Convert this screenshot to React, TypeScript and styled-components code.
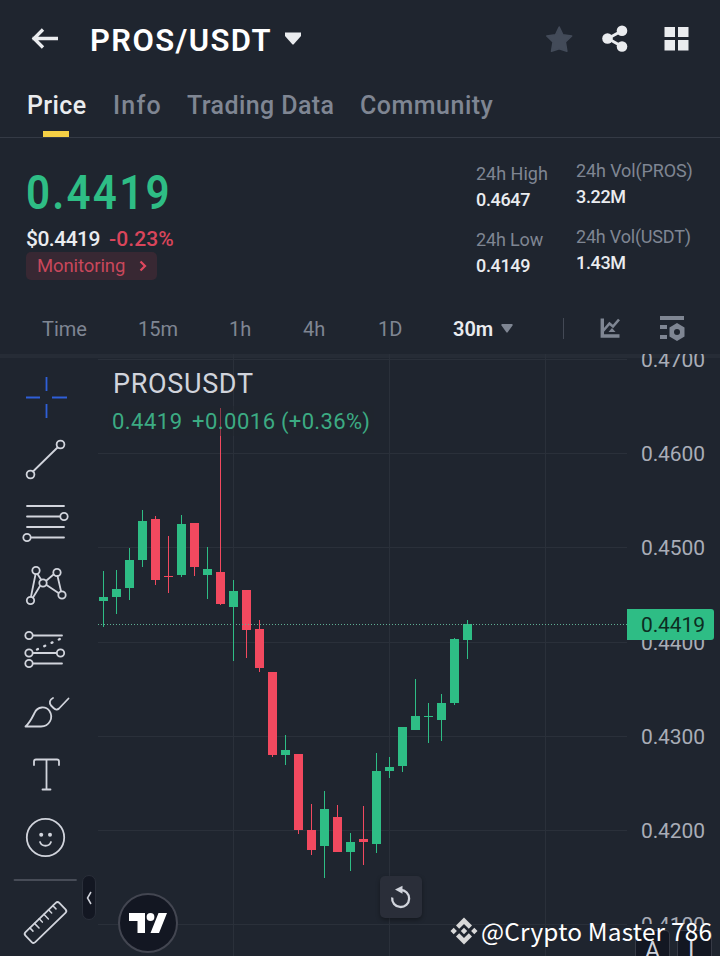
import React from "react";
import styled, { createGlobalStyle } from "styled-components";

const BG = "#1f252f";
const GREEN = "#2ebd85";
const RED = "#f2495f";
const MUTED = "#7f8693";
const BRIGHT = "#eaecef";
const ICON = "#d1d4dc";

const GlobalStyle = createGlobalStyle`
  * { box-sizing: border-box; }
  body { margin: 0; background: ${BG}; overflow: hidden; }
`;

const Screen = styled.div`
  width: 720px;
  height: 956px;
  display: flex;
  flex-direction: column;
  background: ${BG};
  color: ${BRIGHT};
  font-family: Roboto, "Liberation Sans", sans-serif;
  overflow: hidden;
`;

const Header = styled.header`
  height: 78px;
  flex: none;
  display: flex;
  align-items: center;
  padding: 0 28px 0 30px;
`;

const Title = styled.h1`
  margin: 3px 13px 0 32px;
  width: 181px;
  font-size: 31px;
  font-weight: 600;
  line-height: 36px;
  letter-spacing: 1.4px;
  color: #fff;
  white-space: nowrap;
`;

const Actions = styled.div`
  display: flex;
  align-items: center;
  gap: 28px;
  margin-left: auto;
`;

const Tabs = styled.nav`
  height: 60px;
  flex: none;
  display: flex;
  padding-left: 27px;
  border-bottom: 1px solid #343a45;
`;

const Tab = styled.div<{ $width: number; $spacing: number; $active?: boolean }>`
  position: relative;
  width: ${(p) => p.$width}px;
  margin-right: 27px;
  padding-top: 13px;
  font-size: 25px;
  line-height: 30px;
  font-weight: 500;
  letter-spacing: ${(p) => p.$spacing}px;
  white-space: nowrap;
  color: ${(p) => (p.$active ? BRIGHT : MUTED)};
`;

const Underline = styled.span`
  position: absolute;
  left: 16px;
  bottom: 0;
  width: 26px;
  height: 6px;
  background: #f5d045;
`;

const Summary = styled.section`
  height: 162px;
  flex: none;
  display: flex;
  justify-content: space-between;
  padding: 0 20px 0 26px;
`;

const PriceBlock = styled.div`
  padding-top: 28px;
`;

const LastPrice = styled.div`
  font-size: 49px;
  line-height: 54px;
  font-weight: 600;
  letter-spacing: 2.6px;
  color: ${GREEN};
  transform: scaleX(0.86);
  transform-origin: left;
`;

const FiatRow = styled.div`
  display: flex;
  gap: 9px;
  margin-top: 6px;
  font-size: 21px;
  line-height: 26px;
  font-weight: 500;
  letter-spacing: -0.5px;
`;

const Change = styled.span`
  color: #d9455b;
  letter-spacing: 0.1px;
`;

const Badge = styled.div`
  display: flex;
  align-items: center;
  width: 131px;
  height: 28px;
  padding: 0 10px 0 11px;
  justify-content: space-between;
  border-radius: 5px;
  background: #382833;
  color: #c9475b;
  font-size: 18.5px;
  letter-spacing: -0.1px;
`;

const Stats = styled.div`
  display: flex;
  width: 218px;
  margin-right: 6px;
`;

const StatColumn = styled.div<{ $width: number; $top: number }>`
  width: ${(p) => p.$width}px;
  padding-top: ${(p) => p.$top}px;
  flex: none;
  white-space: nowrap;
`;

const Stat = styled.div`
  height: 66px;
`;

const StatLabel = styled.div<{ $spacing: number }>`
  font-size: 18px;
  line-height: 26px;
  letter-spacing: ${(p) => p.$spacing}px;
  color: ${MUTED};
`;

const StatValue = styled.div`
  font-size: 18px;
  line-height: 26px;
  font-weight: 500;
  letter-spacing: -0.35px;
`;

const Intervals = styled.div`
  height: 54px;
  flex: none;
  display: flex;
  align-items: center;
  padding: 3px 34px 0 42px;
  font-size: 20px;
  color: ${MUTED};
`;

const Interval = styled.div<{ $width: number; $active?: boolean }>`
  width: ${(p) => p.$width}px;
  flex: none;
  display: flex;
  align-items: center;
  gap: 8px;
  font-weight: ${(p) => (p.$active ? 600 : 400)};
  color: ${(p) => (p.$active ? BRIGHT : MUTED)};
`;

const Separator = styled.span`
  width: 1px;
  height: 21px;
  margin-right: 36px;
  background: #434955;
`;

const ChartTools = styled.div`
  display: flex;
  align-items: center;
  gap: 38px;
`;

const ChartArea = styled.main`
  position: relative;
  flex: 1;
  min-height: 0;
  display: flex;
`;

const ToolRail = styled.aside`
  width: 98px;
  height: 602px;
  flex: none;
  display: flex;
  flex-direction: column;
  padding-top: 12px;
  border-top: 4px solid #262c36;
`;

const ToolIcon = styled.svg`
  display: block;
  width: 98px;
  flex: none;
  fill: none;
  stroke: ${ICON};
  stroke-width: 1.8;
  stroke-linecap: round;
  stroke-linejoin: round;
`;

const RailToggle = styled.button`
  position: absolute;
  left: 82px;
  top: 521px;
  width: 14px;
  height: 45px;
  padding: 0;
  display: flex;
  align-items: center;
  justify-content: center;
  border: 1px solid #2a2f3a;
  border-radius: 7px;
  background: #131722;
`;

const ChartSvg = styled.svg`
  display: block;
  flex: none;
`;

const TvBadge = styled.div`
  position: absolute;
  left: 118px;
  top: 539px;
  width: 60px;
  height: 60px;
  display: flex;
  align-items: center;
  justify-content: center;
  border: 2px solid #434651;
  border-radius: 50%;
  background: #131722;
`;

const ResetButton = styled.button`
  position: absolute;
  left: 380px;
  top: 522px;
  width: 42px;
  height: 42px;
  padding: 0;
  display: flex;
  align-items: center;
  justify-content: center;
  border: 0;
  border-radius: 5px;
  background: #2a2e39;
  box-shadow: 0 2px 4px rgba(0, 0, 0, 0.35);
`;

const ScaleButtons = styled.div`
  position: absolute;
  left: 635px;
  top: 576px;
  display: flex;
  gap: 7px;
`;

const ScaleButton = styled.button`
  width: 35px;
  height: 38px;
  padding: 3px 0 0;
  border: 1px solid #363a45;
  border-radius: 4px;
  background: #131722;
  color: ${ICON};
  font: 23px/28px Roboto, sans-serif;
`;

const Watermark = styled.div`
  position: absolute;
  left: 450px;
  top: 560px;
  display: flex;
  align-items: center;
  gap: 3px;
  height: 34px;
  color: #fff;
  font-family: "Noto Sans CJK SC", "Noto Sans", sans-serif;
  font-size: 24.4px;
  line-height: 34px;
  letter-spacing: 0.2px;
  white-space: nowrap;
`;

// Each candle: wick top, wick bottom, body top, body bottom; "u" = up, "d" = down.
type Candle = [number, number, number, number, "u" | "d"];
const candles: Candle[] = [
  [571, 627, 597, 601, "u"],
  [570, 614, 589, 597, "u"],
  [548, 600, 560, 588, "u"],
  [510, 567, 521, 560, "u"],
  [516, 585, 519, 580, "d"],
  [536, 593, 576, 577, "d"],
  [515, 577, 524, 575, "u"],
  [523, 576, 523, 567, "d"],
  [547, 599, 569, 575, "u"],
  [408, 605, 572, 604, "d"],
  [580, 661, 591, 607, "u"],
  [590, 658, 590, 630, "d"],
  [620, 672, 629, 668, "d"],
  [672, 757, 672, 755, "d"],
  [735, 765, 750, 755, "u"],
  [754, 834, 754, 830, "d"],
  [804, 855, 830, 850, "d"],
  [791, 878, 809, 846, "u"],
  [805, 852, 817, 852, "d"],
  [833, 871, 842, 852, "u"],
  [806, 865, 839, 842, "d"],
  [753, 853, 771, 844, "u"],
  [757, 778, 767, 771, "u"],
  [727, 772, 727, 766, "u"],
  [679, 730, 716, 730, "u"],
  [703, 743, 716, 717, "u"],
  [694, 741, 703, 720, "u"],
  [638, 705, 639, 703, "u"],
  [620, 659, 624, 640, "u"],
];

const levels: [string, number][] = [
  ["0.4700", 359],
  ["0.4600", 453],
  ["0.4500", 547],
  ["0.4400", 642],
  ["0.4300", 736],
  ["0.4200", 830],
  ["0.4100", 924],
];

function Chart() {
  return (
    <ChartSvg width="622" height="602" viewBox="98 354 622 602">
      <rect x="98" y="354" width="622" height="4" fill="#262c36" />
      {levels.map(([label, y]) => (
        <rect key={label} x="98" y={y} width="529" height="1" fill="#2a303a" />
      ))}
      {[233, 389, 545].map((x) => (
        <rect key={x} x={x} y="354" width="1" height="602" fill="#2a303a" />
      ))}
      {candles.map(([high, low, top, bottom, dir], i) => {
        const color = dir === "u" ? GREEN : RED;
        const x = 99 + i * 13;
        return (
          <g key={i} fill={color}>
            <rect x={x + 4} y={high} width="1" height={low - high} />
            <rect x={x} y={top} width="9" height={bottom - top} />
          </g>
        );
      })}
      {/* The legend's translucent backing dims the tall wick behind it. */}
      <rect x="108" y="406" width="266" height="30" fill={BG} opacity="0.45" />
      <path d="M98 624.5H627" stroke="#5fae93" strokeWidth="1" strokeDasharray="1 2" />
      <g fontFamily="Roboto, sans-serif">
        <text x="113" y="393" fontSize="27" fill={ICON} textLength="140">PROSUSDT</text>
        <g fontSize="22" fill="#3cab83">
          <text x="112" y="429" textLength="70">0.4419</text>
          <text x="192" y="429" textLength="83">+0.0016</text>
          <text x="281" y="429" textLength="89">(+0.36%)</text>
        </g>
        <g fontSize="21" fill="#a9adb7">
          {levels.map(([label, y]) => (
            <text key={label} x="641" y={y + 8} textLength="64">{label}</text>
          ))}
        </g>
        <path d="M627 609H711a3 3 0 0 1 3 3V637a3 3 0 0 1-3 3H627Z" fill={GREEN} />
        <text x="641" y="632" fontSize="21" fill="#0d2d22" textLength="64">0.4419</text>
      </g>
      <rect x="628" y="924" width="92" height="32" fill={BG} />
    </ChartSvg>
  );
}

const tools: React.ReactNode[] = [
  <g stroke="#2f5fd8" strokeLinecap="butt">
    <path d="M46.5 377V391M46.5 404V418M26 397.5H40M52 397.5H67" />
  </g>,
  <>
    <path d="M33 471.500L57.500 447.500" />
    <circle cx="60.500" cy="444.500" r="3.900" />
    <circle cx="30.500" cy="474.500" r="3.900" />
  </>,
  <>
    <path d="M27 506H64M27 516.500H59.500M27 527H64M31.500 537.500H64" />
    <circle cx="64" cy="516.500" r="3.700" />
    <circle cx="27" cy="537.500" r="3.700" />
  </>,
  <>
    <path d="M35.500 574.500L31 596.500M37.500 574L41 579.500M40 586L33 597.500M46.500 580.500L53.500 574.500M57.500 576L61 591M46.500 585L58.500 593" />
    <circle cx="36" cy="570.500" r="3.700" />
    <circle cx="57" cy="572.500" r="3.700" />
    <circle cx="43" cy="583" r="3.700" />
    <circle cx="30.500" cy="600.500" r="3.700" />
    <circle cx="62" cy="595" r="3.700" />
  </>,
  <>
    <path d="M33 635.500H62M33 653H56.500M33 663.500H62" />
    <path d="M37 649.500L61 638.500" strokeDasharray="1 7" strokeWidth="2.400" />
    <circle cx="29" cy="635.500" r="3.700" />
    <circle cx="29" cy="653" r="3.700" />
    <circle cx="60.500" cy="653" r="3.700" />
    <circle cx="29" cy="663.500" r="3.700" />
  </>,
  <>
    <path d="M25.500 726.500C30 722.500 32 718 34.500 713C37.500 706 46 706 49.500 711C54 718 49 726.500 41 726.500Z" />
    <path d="M53 698C49.500 699.500 49 703 51 705.500L53.500 708C55.500 710 57.500 710 59 708.500L68.500 698.500" />
  </>,
  <path d="M34 765V761.500Q34 759.500 36 759.500H57Q59 759.500 59 761.500V765M46.500 759.500V789.500M42.500 789.500H50.500" />,
  <>
    <circle cx="45.500" cy="837.500" r="18.700" />
    <path d="M40 842C42 847 49 847 51 842" />
    <g fill={ICON} stroke="none">
      <circle cx="41.200" cy="834.700" r="2" />
      <circle cx="50" cy="834.700" r="2" />
    </g>
  </>,
];

export default function App() {
  return (
    <Screen>
      <GlobalStyle />
      <Header>
        <svg width="28" height="22" viewBox="0 0 28 22" fill="none" stroke={BRIGHT} strokeWidth="3.300">
          <path d="M2.500 10.500H28M13 1.500L4 10.500L13 19.500" />
        </svg>
        <Title>PROS/USDT</Title>
        <svg width="18" height="14" viewBox="0 0 18 14" fill={BRIGHT}>
          <path d="M1 .5H17V4L9.500 12.500H8.500L1 4Z" />
        </svg>
        <Actions>
          <svg width="28" height="28" viewBox="0 0 28 28" fill="#434b59" stroke="#434b59" strokeWidth="1.500" strokeLinejoin="round">
            <path d="M13.200 2L16.900 9.800L25.700 11L19.400 17L20.900 26.300L13.200 23.800L5.500 26.300L7 17L.8 11L9.500 9.800Z" />
          </svg>
          <svg width="28" height="28" viewBox="0 0 28 28" fill={BRIGHT}>
            <path d="M6 13.500L20 5.800M6 13.500L20 21.500" stroke={BRIGHT} strokeWidth="3" />
            <circle cx="5.500" cy="13.500" r="5.300" />
            <circle cx="20" cy="5.800" r="5.300" />
            <circle cx="20" cy="21.500" r="5.300" />
          </svg>
          <svg width="34" height="28" viewBox="0 0 34 28" fill={BRIGHT}>
            <path d="M6.500 2H17V12H6.500ZM20 2H30.500V12H20ZM6.500 15H17V25.500H6.500ZM20 15H30.500V25.500H20Z" />
          </svg>
        </Actions>
      </Header>

      <Tabs>
        <Tab $width={59} $spacing={0.4} $active>
          Price
          <Underline />
        </Tab>
        <Tab $width={47} $spacing={1.2}>Info</Tab>
        <Tab $width={146} $spacing={0.4}>Trading Data</Tab>
        <Tab $width={133} $spacing={0.5}>Community</Tab>
      </Tabs>

      <Summary>
        <PriceBlock>
          <LastPrice>0.4419</LastPrice>
          <FiatRow>
            <span>$0.4419</span>
            <Change>-0.23%</Change>
          </FiatRow>
          <Badge>
            Monitoring
            <svg width="8" height="12" viewBox="0 0 8 12" fill="none" stroke="#e0485e" strokeWidth="2.200">
              <path d="M1.500 1.500L6 6L1.500 10.500" />
            </svg>
          </Badge>
        </PriceBlock>
        <Stats>
          <StatColumn $width={100} $top={23}>
            <Stat>
              <StatLabel $spacing={0}>24h High</StatLabel>
              <StatValue>0.4647</StatValue>
            </Stat>
            <Stat>
              <StatLabel $spacing={-0.15}>24h Low</StatLabel>
              <StatValue>0.4149</StatValue>
            </Stat>
          </StatColumn>
          <StatColumn $width={118} $top={20}>
            <Stat>
              <StatLabel $spacing={-0.12}>24h Vol(PROS)</StatLabel>
              <StatValue>3.22M</StatValue>
            </Stat>
            <Stat>
              <StatLabel $spacing={-0.2}>24h Vol(USDT)</StatLabel>
              <StatValue>1.43M</StatValue>
            </Stat>
          </StatColumn>
        </Stats>
      </Summary>

      <Intervals>
        <Interval $width={96}>Time</Interval>
        <Interval $width={91}>15m</Interval>
        <Interval $width={74}>1h</Interval>
        <Interval $width={75}>4h</Interval>
        <Interval $width={75}>1D</Interval>
        <Interval $width={110} $active>
          30m
          <svg width="12" height="10" viewBox="0 0 12 10" fill={MUTED}>
            <path d="M.5 0H11.500V1.500L6.500 8.500H5.500L.5 1.500Z" />
          </svg>
        </Interval>
        <Separator />
        <ChartTools>
          <svg width="22" height="22" viewBox="600 317 22 22" fill="none" stroke={MUTED} strokeWidth="2.600">
            <path d="M602.300 317.500V335H619.500" strokeWidth="3.400" />
            <path d="M603 330L609.500 322.500L613 325.500L619 318.500" />
            <path d="M608.500 331H615.500L612 327Z" fill={MUTED} stroke="none" />
          </svg>
          <svg width="26" height="28" viewBox="660 315 26 28" fill={MUTED}>
            <path d="M660 316H684V320H660ZM660 325H667V329H660ZM660 335H667V339H660Z" />
            <path fillRule="evenodd" d="M677 323L684.500 327.500V336.500L677 341L669.500 336.500V327.500ZM677 329A3 3 0 1 0 677 335A3 3 0 1 0 677 329Z" />
          </svg>
        </ChartTools>
      </Intervals>

      <ChartArea>
        <ToolRail>
          {tools.map((glyph, i) => (
            <ToolIcon key={i} height="63" viewBox={`0 ${370 + i * 63} 98 63`}>
              {glyph}
            </ToolIcon>
          ))}
          <ToolIcon height="82" viewBox="0 874 98 82">
            <path d="M14.500 880H76" stroke="#474c57" />
            <g transform="translate(45.500 922.500) rotate(-44)">
              <rect x="-23.500" y="-7" width="47" height="14" rx="2.500" />
              <path d="M-15 -7V-2.500M-8.500 -7V-.5M-2 -7V-2.500M4.500 -7V-.5M11 -7V-2.500M17 -7V-2.500" strokeWidth="1.500" />
            </g>
          </ToolIcon>
        </ToolRail>
        <Chart />
        <RailToggle>
          <svg width="6" height="14" viewBox="0 0 6 14" fill="none" stroke={ICON} strokeWidth="1.500">
            <path d="M5 1L1.500 7L5 13" />
          </svg>
        </RailToggle>
        <TvBadge>
          <svg width="38" height="20" viewBox="0 0 38 20" fill="#fff">
            <path d="M0 0H16V20H8.500V8H0ZM29.500 0H38L30 20H21.500Z" />
            <circle cx="21.500" cy="4" r="3.900" />
          </svg>
        </TvBadge>
        <ResetButton>
          <svg width="22" height="24" viewBox="0 0 22 24" fill="none" stroke={ICON} strokeWidth="2.300">
            <path d="M2.200 12.500A8.500 8.500 0 1 0 10.500 5" />
            <path d="M5 4.500L12.500 .8V8.800Z" fill={ICON} stroke="none" />
          </svg>
        </ResetButton>
        <ScaleButtons>
          <ScaleButton>A</ScaleButton>
          <ScaleButton>L</ScaleButton>
        </ScaleButtons>
        <Watermark>
          <svg width="28" height="28" viewBox="0 0 28 28" fill="#d8d8d8">
            <path d="M14 .5L22 8.500L18.800 11.700L14 6.900L9.200 11.700L6 8.500ZM14 27.500L22 19.500L18.800 16.300L14 21.100L9.200 16.300L6 19.500ZM14 10.800L17.200 14L14 17.200L10.800 14ZM3.700 10.800L6.900 14L3.700 17.200L.5 14ZM24.300 10.800L27.500 14L24.300 17.200L21.100 14Z" />
          </svg>
          @Crypto Master 786
        </Watermark>
      </ChartArea>
    </Screen>
  );
}
